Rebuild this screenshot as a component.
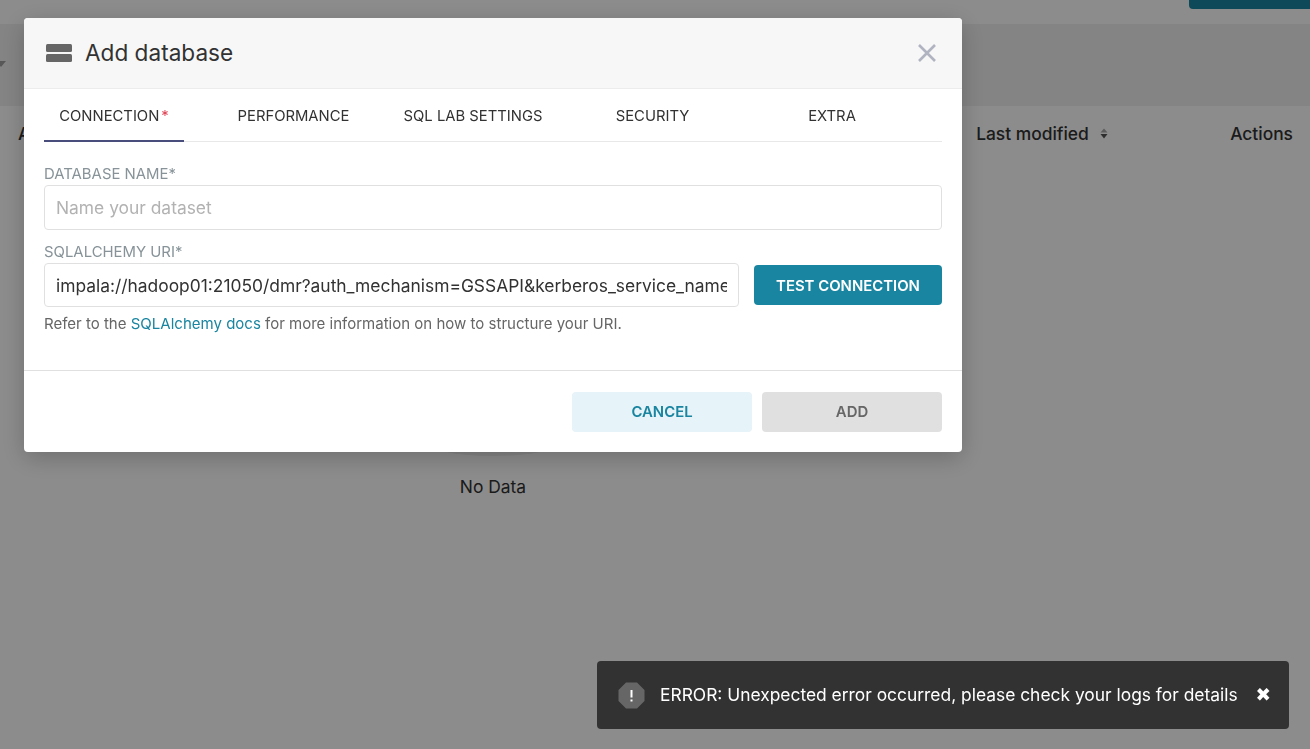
<div class="page">
  <div class="topstrip"><div class="topbtn"></div></div>
  <div class="band"><span class="caret"></span></div>
  <div class="thead">
    <span class="th-a">A</span>
    <span class="th-lm">Last modified
      <svg class="sort" width="8" height="12" viewBox="0 0 8 12"><path d="M4 1.500 7.500 5.500H.5z" fill="#a8a8a8"/><path d="M4 11.500 .5 7h7z" fill="#555"/></svg>
    </span>
    <span class="th-ac">Actions</span>
  </div>
  <div class="empty">
    <div class="blob"></div>
    <div class="nodata">No Data</div>
  </div>
</div>

<div class="overlay"></div>

<div class="modal">
  <header class="mhead">
    <svg class="dbicon" width="26" height="18" viewBox="0 0 26 18"><rect x="0" y="0" width="26" height="8" rx="1.500" fill="#666"/><rect x="0" y="10" width="26" height="8" rx="1.500" fill="#666"/></svg>
    <h1>Add database</h1>
    <svg class="x" width="20" height="20" viewBox="0 0 20 20"><path d="M2 2 18 18M18 2 2 18" stroke="#b0b4c0" stroke-width="2.600" fill="none"/></svg>
  </header>
  <div class="mbody">
    <nav class="tabs">
      <div class="tab active">CONNECTION<span class="req">*</span></div>
      <div class="tab">PERFORMANCE</div>
      <div class="tab">SQL LAB SETTINGS</div>
      <div class="tab">SECURITY</div>
      <div class="tab">EXTRA</div>
    </nav>
    <div class="label first">DATABASE NAME*</div>
    <div class="input ph"><span>Name your dataset</span></div>
    <div class="label second">SQLALCHEMY URI*</div>
    <div class="urirow">
      <div class="input uri"><span class="clip">impala://hadoop01:21050/dmr?auth_mechanism=GSSAPI&amp;kerberos_service_name</span></div>
      <button class="test">TEST CONNECTION</button>
    </div>
    <p class="help">Refer to the <a href="#docs">SQLAlchemy docs</a> for more information on how to structure your URI.</p>
  </div>
  <footer class="mfoot">
    <button class="cancel"><span>CANCEL</span></button>
    <button class="add"><span>ADD</span></button>
  </footer>
</div>

<div class="toast">
  <svg class="oct" width="27" height="27" viewBox="0 0 27 27"><path d="M8 .5h11L26.500 8v11L19 26.500H8L.5 19V8z" fill="#666"/><rect x="12.500" y="8" width="2" height="7.500" fill="#fff"/><rect x="12.500" y="17.500" width="2" height="2" fill="#fff"/></svg>
  <span class="msg">ERROR: Unexpected error occurred, please check your logs for details</span>
  <span class="close">✖</span>
</div>

<style>
  :global(body) {
    margin: 0;
    font-family: Inter, "Liberation Sans", sans-serif;
    background: #fff;
    overflow: hidden;
  }
  .page {
    height: 749px;
    display: flex;
    flex-direction: column;
    background: #fff;
    color: #323232;
  }
  .topstrip {
    height: 24px;
    display: flex;
    justify-content: flex-end;
  }
  .topbtn {
    width: 121px;
    height: 9px;
    background: #1985a0;
    border-radius: 0 0 0 4px;
  }
  .band {
    height: 82px;
    background: #f1f1f1;
    position: relative;
  }
  .caret {
    position: absolute;
    left: -4px;
    top: 37px;
    border: 5px solid transparent;
    border-top: 6px solid #a0a0a0;
  }
  .thead {
    height: 54px;
    display: flex;
    align-items: center;
    font-size: 17.400px;
    font-weight: 500;
    padding-left: 18px;
    padding-right: 17px;
  }
  .th-a { flex: 1; }
  .th-lm { width: 254px; display: flex; align-items: center; gap: 11px; }
  .empty {
    display: flex;
    flex-direction: column;
    align-items: center;
    width: 986px;
    padding-top: 315px;
    position: relative;
  }
  .blob {
    position: absolute;
    top: 264px;
    left: 420px;
    width: 146px;
    height: 32px;
    border-radius: 50%;
    background: #f0f0f0;
  }
  .nodata {
    font-size: 17.400px;
    line-height: 24px;
  }
  .overlay {
    position: fixed;
    inset: 0;
    background: rgba(0, 0, 0, 0.45);
  }
  .modal {
    position: fixed;
    left: 24px;
    top: 18px;
    width: 938px;
    height: 434px;
    background: #fff;
    border-radius: 4px;
    box-shadow: 0 6px 24px rgba(0, 0, 0, 0.22);
    display: flex;
    flex-direction: column;
    color: #323232;
  }
  .mhead {
    height: 71px;
    flex: none;
    background: #f7f7f7;
    border-bottom: 1px solid #ececec;
    border-radius: 4px 4px 0 0;
    box-sizing: border-box;
    display: flex;
    align-items: center;
    padding: 0 25px 0 22px;
  }
  .dbicon { margin-right: 13px; }
  h1 {
    margin: 0;
    font-size: 22.600px;
    font-weight: 400;
    line-height: 30px;
    flex: 1;
    color: #323232;
  }
  .mbody {
    padding: 0 20px;
    flex: 1;
  }
  .tabs {
    display: flex;
    gap: 39.500px;
    border-bottom: 1px solid #e8e8e8;
    box-sizing: border-box;
    height: 53px;
  }
  .tab {
    width: 140px;
    flex: none;
    font-size: 14.800px;
    line-height: 20px;
    padding-top: 17px;
    text-align: center;
    white-space: nowrap;
    box-sizing: border-box;
    height: 53px;
    color: #323232;
  }
  .tab.active {
    border-bottom: 2px solid #484d7c;
  }
  .req { color: #e04355; margin-left: 2px; }
  .label {
    font-size: 14.900px;
    line-height: 20px;
    color: #879399;
  }
  .label.first { margin-top: 22px; margin-bottom: 1px; }
  .label.second { margin-top: 12px; margin-bottom: 1px; }
  .input {
    border: 1px solid #e0e0e0;
    border-radius: 4px;
    height: 45px;
    box-sizing: border-box;
    display: flex;
    align-items: center;
    padding: 0 11px;
    font-size: 17.400px;
  }
  .ph { color: #b2b2b2; }
  .urirow {
    display: flex;
    align-items: center;
    gap: 15px;
  }
  .uri {
    width: 695px;
    flex: none;
    color: #323232;
    height: 44px;
  }
  .clip {
    display: block;
    overflow: hidden;
    white-space: nowrap;
    width: 671px;
  }
  button {
    border: 0;
    border-radius: 4px;
    font-family: inherit;
    font-size: 14.900px;
    font-weight: 600;
    height: 40px;
    padding: 0;
  }
  .test {
    width: 188px;
    background: #1985a0;
    color: #fff;
    padding-top: 1px;
  }
  .help {
    margin: 7px 0 0;
    font-size: 15.030px;
    line-height: 20px;
    color: #666;
  }
  a { color: #1985a0; text-decoration: none; }
  .mfoot {
    flex: none;
    height: 82px;
    border-top: 1px solid #e0e0e0;
    display: flex;
    justify-content: flex-end;
    gap: 10px;
    padding: 21px 20px 0;
    box-sizing: border-box;
  }
  .cancel, .add { width: 180px; }
  .cancel { background: #e6f3f8; color: #1985a0; }
  .add { background: #e0e0e0; color: #666; }
  .toast {
    position: fixed;
    left: 597px;
    top: 661px;
    width: 692px;
    height: 68px;
    background: #323232;
    border-radius: 4px;
    display: flex;
    align-items: center;
    padding-left: 21px;
    box-sizing: border-box;
    color: #fff;
    font-size: 17.400px;
  }
  .oct { margin-right: 15px; flex: none; }
  .msg { white-space: nowrap; position: relative; top: -1px; }
  .close { margin-left: 18px; font-size: 18.500px; font-family: "DejaVu Sans", sans-serif; position: relative; top: -1px; }
</style>
